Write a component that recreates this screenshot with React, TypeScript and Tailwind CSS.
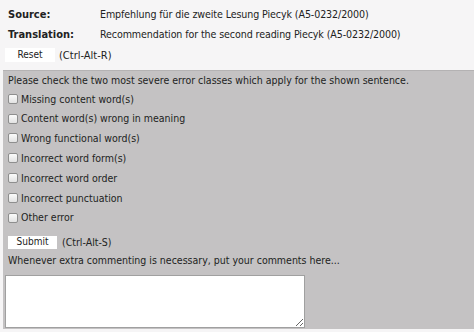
import React from "react";

const items = [
  "Missing content word(s)",
  "Content word(s) wrong in meaning",
  "Wrong functional word(s)",
  "Incorrect word form(s)",
  "Incorrect word order",
  "Incorrect punctuation",
  "Other error",
];

function Box() {
  return <span className="inline-block w-[10px] h-[10px] rounded-[2px] border border-[#8e8e8e] bg-gradient-to-b from-[#fbfbfb] to-[#e2e2e2] mr-[3px] shrink-0" />;
}

export default function App() {
  return (
    <div className="w-[474px] h-[332px] bg-[#f6f5f6] text-[#222] text-[11px] leading-none overflow-hidden" style={{ fontFamily: '"DejaVu Sans Condensed", "DejaVu Sans", sans-serif' }}>
      <div className="pt-[8px] px-[8px] h-[70px]">
        <div className="flex items-center h-[12px]">
          <span className="w-[92px] font-bold">Source:</span>
          <span className="text-[10.6px] tracking-[-0.1px]">Empfehlung für die zweite Lesung Piecyk (A5-0232/2000)</span>
        </div>
        <div className="flex items-center h-[12px] mt-[8px]">
          <span className="w-[92px] font-bold">Translation:</span>
          <span className="text-[10.6px] tracking-[-0.1px]">Recommendation for the second reading Piecyk (A5-0232/2000)</span>
        </div>
        <div className="flex items-center mt-[8px] -ml-[3px]">
          <span className="w-[50px] h-[14px] bg-white flex items-center justify-center text-[10px]">Reset</span>
          <span className="ml-[4px]">(Ctrl-Alt-R)</span>
        </div>
      </div>
      <div className="ml-[3px] h-[259px] bg-[#c4c2c3] border-t border-[#b4b2b3] pl-[5px] pt-[3px] text-[10.5px]">
        <div className="h-[12px] flex items-center">Please check the two most severe error classes which apply for the shown sentence.</div>
        <div className="flex flex-col mt-[3px]">
          {items.map((t) => (
            <div key={t} className="flex items-center h-[19.8px]">
              <Box />
              <span>{t}</span>
            </div>
          ))}
        </div>
        <div className="flex items-center mt-[8px]">
          <span className="w-[49px] h-[13px] bg-white flex items-center justify-center text-[10px]">Submit</span>
          <span className="ml-[5px]">(Ctrl-Alt-S)</span>
        </div>
        <div className="h-[12px] flex items-center mt-[6px]">Whenever extra commenting is necessary, put your comments here...</div>
        <textarea className="block mt-[8px] -ml-[3px] w-[300px] h-[53px] bg-white border border-[#a0a0a0] resize" />
      </div>
    </div>
  );
}
